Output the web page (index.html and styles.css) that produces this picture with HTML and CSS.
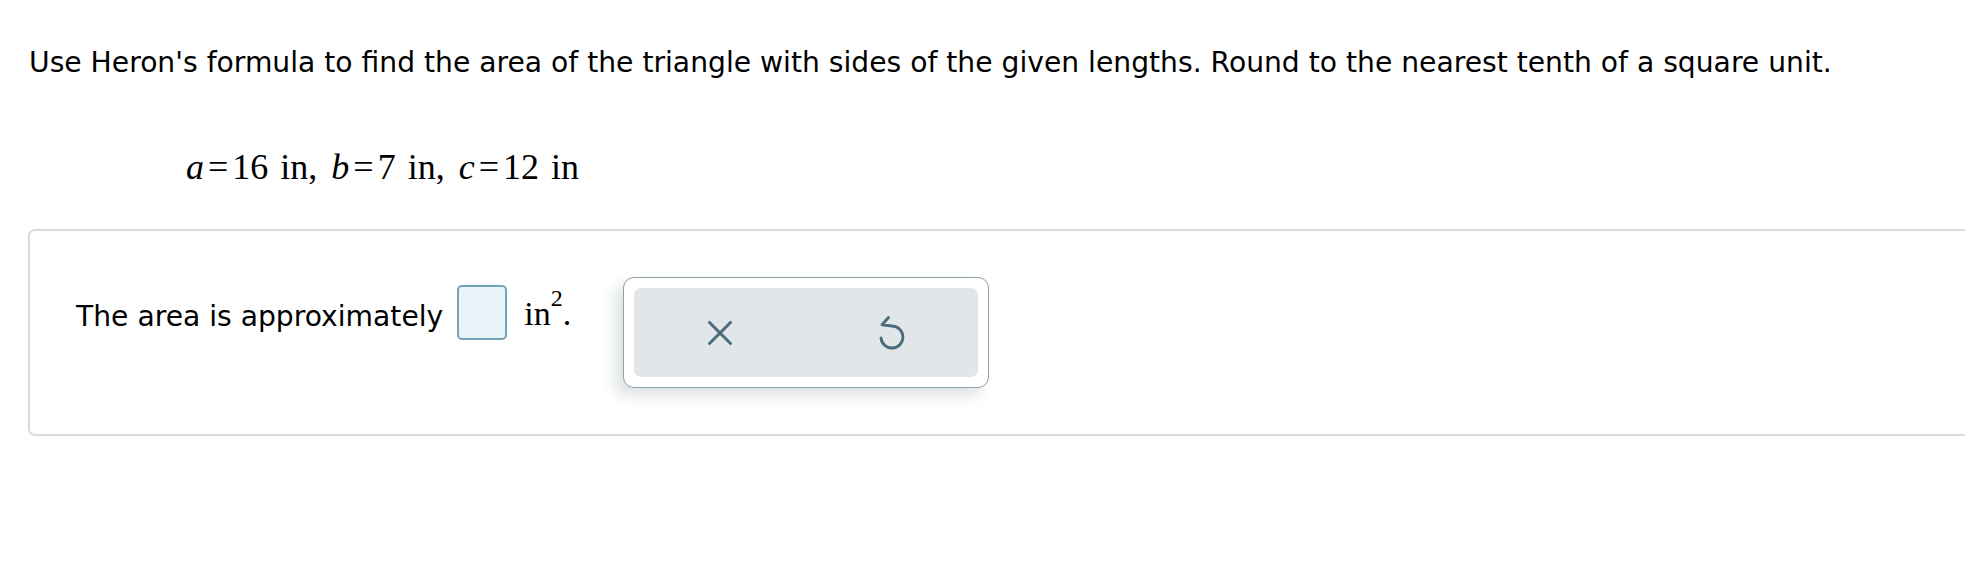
FILE: index.html
```html
<!DOCTYPE html>
<html lang="en">
<head>
<meta charset="utf-8">
<title>Heron's formula</title>
<link rel="stylesheet" href="styles.css">
</head>
<body>
<div class="page">
  <p class="prompt">Use Heron's formula to find the area of the triangle with sides of the given lengths. Round to the nearest tenth of a square unit.</p>
  <p class="given">
    <span class="mi">a</span><span class="mo">=</span>16<span class="unit">in,</span>
    <span class="mi">b</span><span class="mo">=</span>7<span class="unit">in,</span>
    <span class="mi">c</span><span class="mo">=</span>12<span class="unit">in</span>
  </p>
  <div class="card">
    <div class="answer">
      <span class="label">The area is approximately</span>
      <span class="input" role="textbox" aria-label="area"></span>
      <span class="units">in<sup class="sup">2</sup>.</span>
    </div>
    <div class="tools">
      <div class="tools-inner">
        <button class="tool" aria-label="Clear">
          <svg width="24" height="24" viewBox="0 0 24 24"><path d="M1.5 1.5 L22.5 22.5 M22.5 1.5 L1.5 22.5" fill="none" stroke="#4a6c79" stroke-width="3" stroke-linecap="round"/></svg>
        </button>
        <button class="tool" aria-label="Reset">
          <svg width="27" height="34" viewBox="0 0 27 34"><path d="M9.5 1.5 L3 8.8 L13 10 A11 11 0 1 1 2 22" fill="none" stroke="#4a6c79" stroke-width="2.8" stroke-linecap="round" stroke-linejoin="round"/></svg>
        </button>
      </div>
    </div>
  </div>
</div>
</body>
</html>
```

FILE: styles.css
```css
html, body {
  margin: 0;
  padding: 0;
  background: #ffffff;
  overflow: hidden;
}

.page {
  width: 1965px;
  height: 568px;
  font-family: "DejaVu Sans", Verdana, sans-serif;
  color: #000000;
}

.prompt {
  margin: 0;
  padding: 46px 0 0 29px;
  font-size: 28.2px;
  line-height: 34px;
}

.given {
  margin: 0;
  padding: 66px 0 0 186px;
  font-family: "Liberation Serif", "Times New Roman", serif;
  font-size: 36px;
  line-height: 42px;
}

.mi {
  font-style: italic;
}

.mo {
  margin: 0 4px;
}

.unit {
  margin-left: 12px;
  margin-right: 5px;
}

.card {
  margin: 41px -40px 0 28px;
  border: 2px solid #d6dce0;
  border-radius: 7px;
  padding: 46px 0 0 46px;
  box-sizing: border-box;
  height: 207px;
  display: flex;
  align-items: flex-start;
}

.answer {
  display: flex;
  align-items: center;
  margin-top: 8px;
  height: 55px;
}

.label {
  font-size: 28.2px;
  margin-top: 8px;
}

.input {
  width: 50px;
  height: 55px;
  box-sizing: border-box;
  border: 2px solid #72a3b2;
  border-radius: 5px;
  background: #e9f4f9;
  margin-left: 14px;
}

.units {
  font-family: "Liberation Serif", "Times New Roman", serif;
  font-size: 34px;
  margin-left: 17px;
  margin-top: 2px;
}

.sup {
  font-size: 24px;
  vertical-align: 0;
  position: relative;
  top: -19px;
  margin-left: 0;
}

.tools {
  margin-left: 52px;
  width: 366px;
  height: 111px;
  box-sizing: border-box;
  border: 1.5px solid #8da1aa;
  border-radius: 11px;
  padding: 10px;
  background: #ffffff;
  box-shadow: -8px 8px 14px rgba(60, 80, 90, 0.16);
}

.tools-inner {
  height: 100%;
  background: #e1e6e9;
  border-radius: 7px;
  display: grid;
  grid-template-columns: 1fr 1fr;
}

.tool {
  border: 0;
  background: transparent;
  padding: 0;
  display: flex;
  align-items: center;
  justify-content: center;
  cursor: pointer;
}

.tool svg {
  display: block;
}
```
